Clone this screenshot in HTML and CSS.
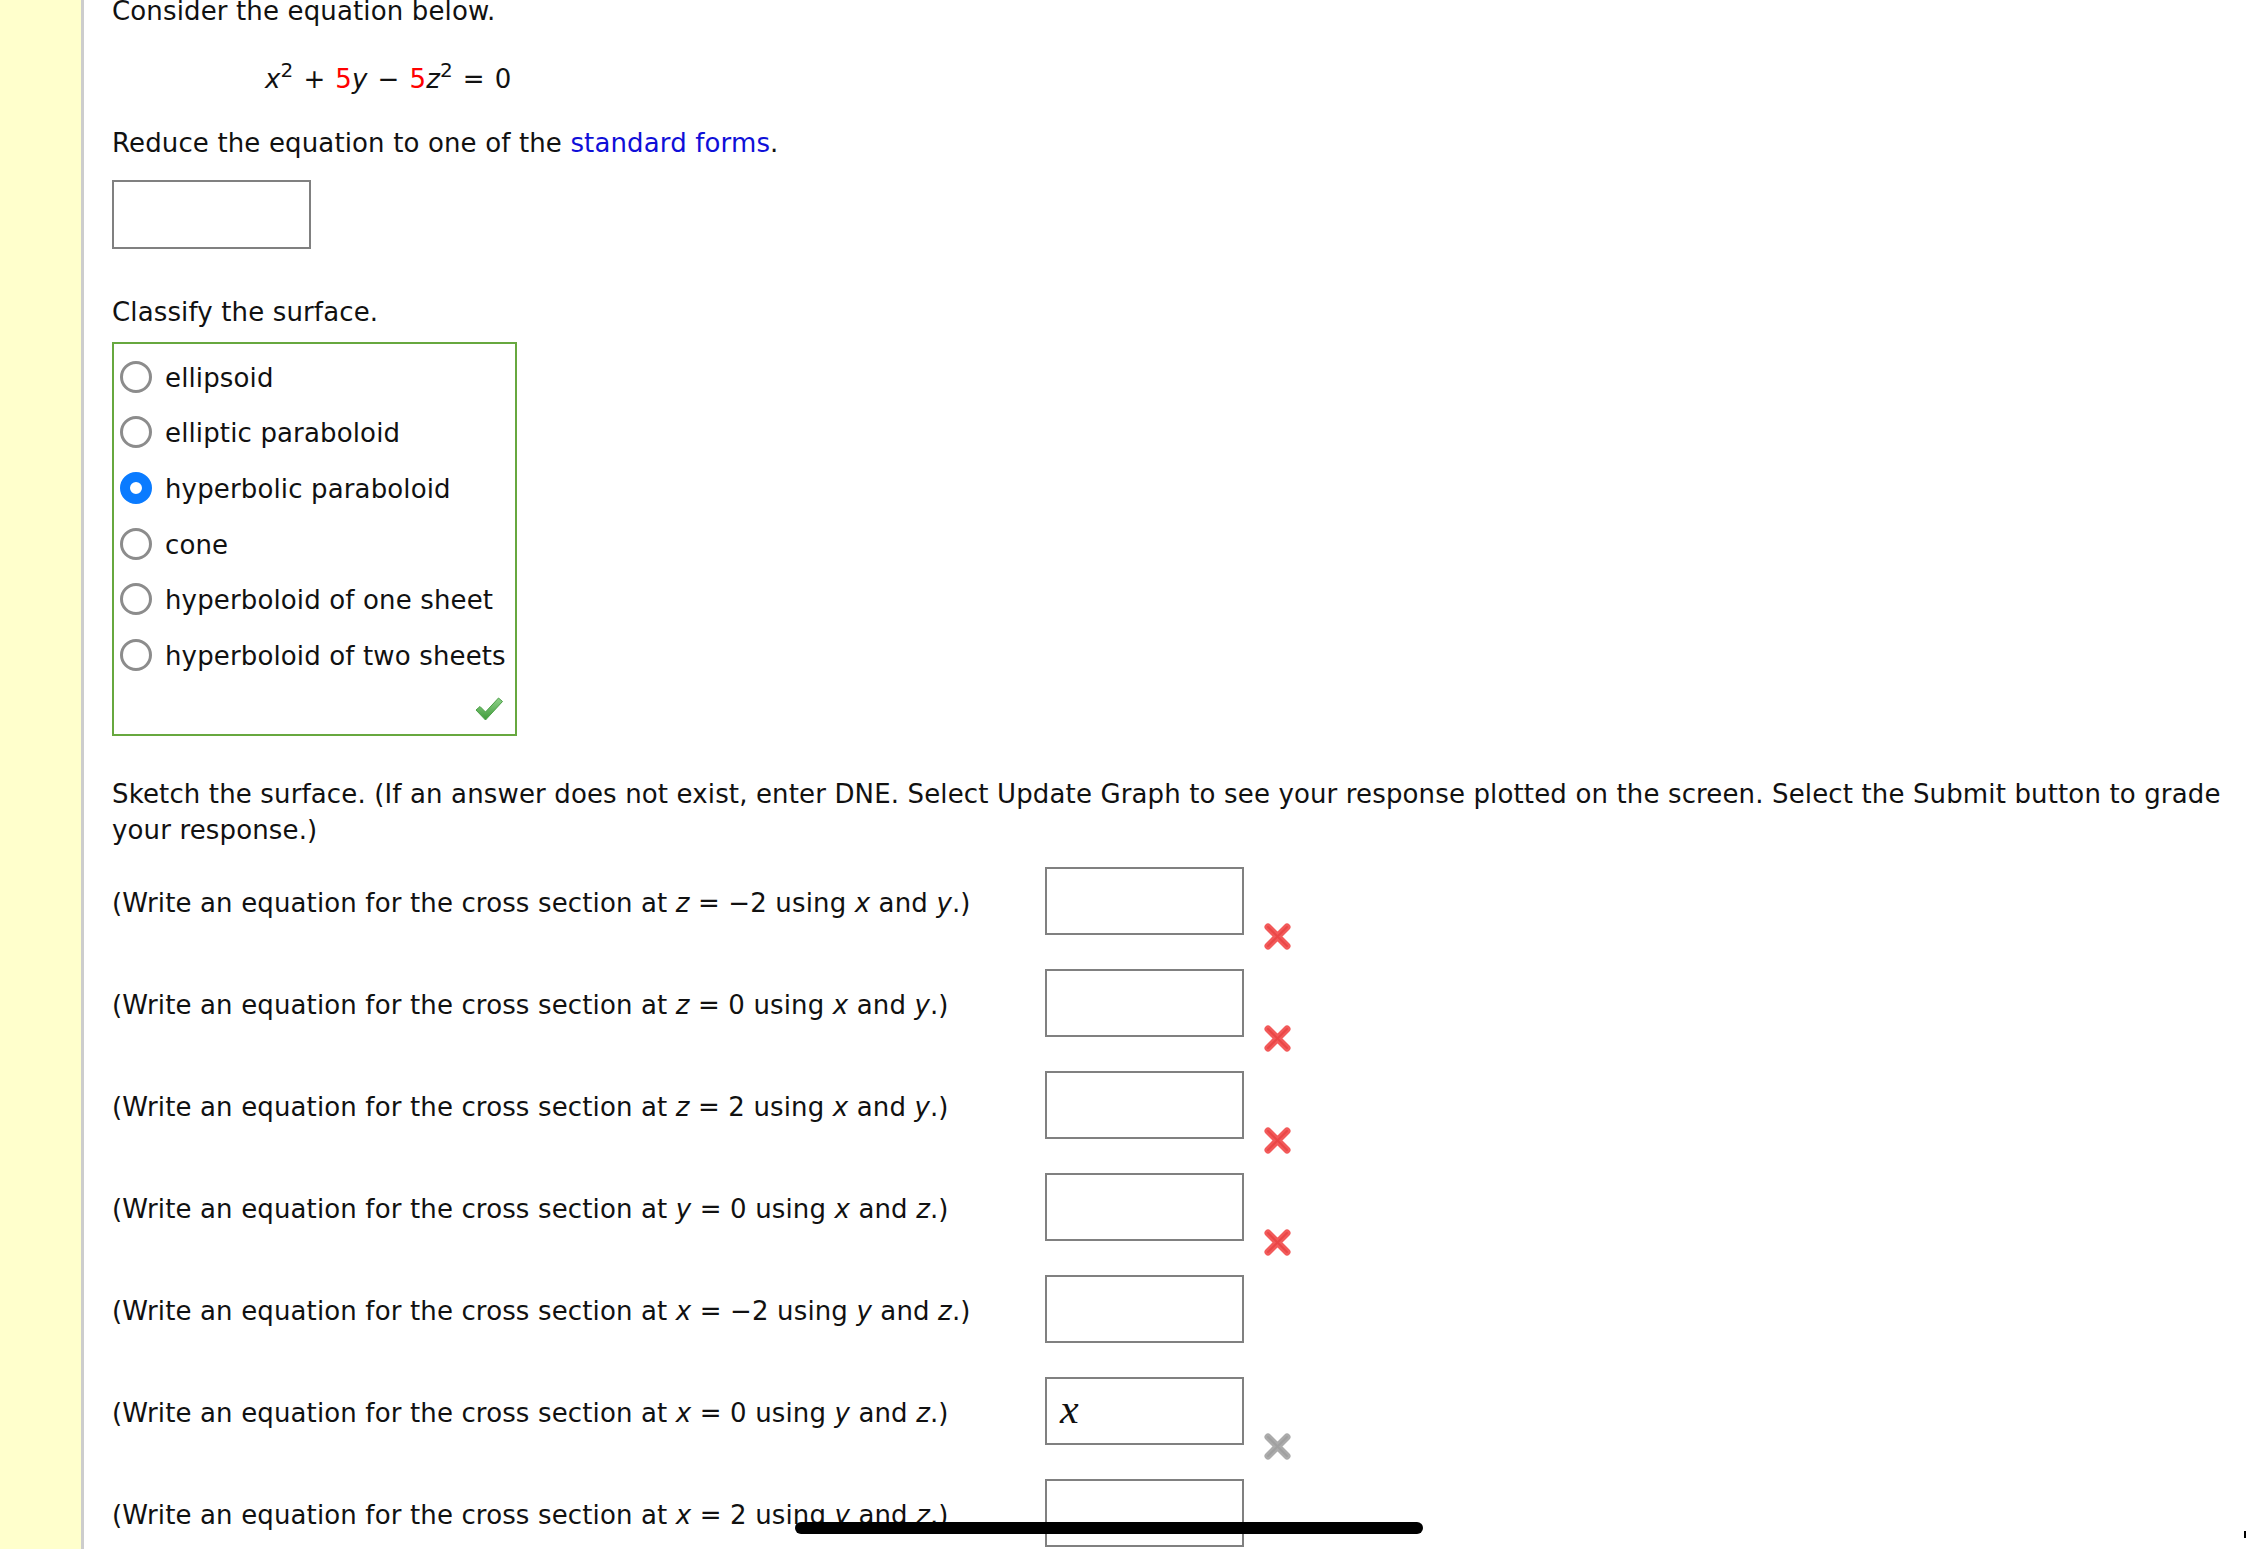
FILE: index.html
```html
<!DOCTYPE html>
<html lang="en">
<head>
<meta charset="utf-8">
<title>Quadric surface</title>
<link rel="stylesheet" href="styles.css">
</head>
<body>
<div class="page">
  <aside class="sidebar"></aside>
  <main class="content">
    <p class="line first">Consider the equation below.</p>
    <p class="line equation"><i>x</i><sup>2</sup><span class="op">+</span><span class="red">5</span><i>y</i><span class="op">−</span><span class="red">5</span><i>z</i><sup>2</sup><span class="op">=</span>0</p>
    <p class="line reduce">Reduce the equation to one of the <a class="link" href="#">standard forms</a>.</p>
    <div class="answer-box single"></div>
    <p class="line classify">Classify the surface.</p>
    <div class="choices">
      <div class="choice"><span class="radio"></span><span>ellipsoid</span></div>
      <div class="choice"><span class="radio"></span><span>elliptic paraboloid</span></div>
      <div class="choice"><span class="radio checked"></span><span>hyperbolic paraboloid</span></div>
      <div class="choice"><span class="radio"></span><span>cone</span></div>
      <div class="choice"><span class="radio"></span><span>hyperboloid of one sheet</span></div>
      <div class="choice"><span class="radio"></span><span>hyperboloid of two sheets</span></div>
      <div class="check-row">
        <svg class="check" width="30" height="26" viewBox="0 0 30 26">
          <defs>
            <linearGradient id="cg" x1="0" y1="0" x2="0" y2="1">
              <stop offset="0" stop-color="#8fd18a"/>
              <stop offset="1" stop-color="#3f9b3a"/>
            </linearGradient>
          </defs>
          <path d="M2 14 L6 10.5 L11.5 16 L24.5 2 L28.5 5.5 L11.5 24 Z" fill="url(#cg)" stroke="#4a9f45" stroke-width="1" stroke-linejoin="round"/>
        </svg>
      </div>
    </div>
    <p class="line sketch">Sketch the surface. (If an answer does not exist, enter DNE. Select Update Graph to see your response plotted on the screen. Select the Submit button to grade your response.)</p>
    <div class="rows">
      <div class="row">
        <span class="label">(Write an equation for the cross section at <i>z</i> = −2 using <i>x</i> and <i>y</i>.)</span>
        <div class="answer-box"></div>
        <svg class="mark" width="27" height="27" viewBox="0 0 27 27"><path d="M4 4 L23 23 M23 4 L4 23" stroke="#f25a5a" stroke-width="7" stroke-linecap="round"/><path d="M4 4 L23 23 M23 4 L4 23" stroke="#e63b3b" stroke-width="2" stroke-linecap="round" opacity="0.6"/></svg>
      </div>
      <div class="row">
        <span class="label">(Write an equation for the cross section at <i>z</i> = 0 using <i>x</i> and <i>y</i>.)</span>
        <div class="answer-box"></div>
        <svg class="mark" width="27" height="27" viewBox="0 0 27 27"><path d="M4 4 L23 23 M23 4 L4 23" stroke="#f25a5a" stroke-width="7" stroke-linecap="round"/><path d="M4 4 L23 23 M23 4 L4 23" stroke="#e63b3b" stroke-width="2" stroke-linecap="round" opacity="0.6"/></svg>
      </div>
      <div class="row">
        <span class="label">(Write an equation for the cross section at <i>z</i> = 2 using <i>x</i> and <i>y</i>.)</span>
        <div class="answer-box"></div>
        <svg class="mark" width="27" height="27" viewBox="0 0 27 27"><path d="M4 4 L23 23 M23 4 L4 23" stroke="#f25a5a" stroke-width="7" stroke-linecap="round"/><path d="M4 4 L23 23 M23 4 L4 23" stroke="#e63b3b" stroke-width="2" stroke-linecap="round" opacity="0.6"/></svg>
      </div>
      <div class="row">
        <span class="label">(Write an equation for the cross section at <i>y</i> = 0 using <i>x</i> and <i>z</i>.)</span>
        <div class="answer-box"></div>
        <svg class="mark" width="27" height="27" viewBox="0 0 27 27"><path d="M4 4 L23 23 M23 4 L4 23" stroke="#f25a5a" stroke-width="7" stroke-linecap="round"/><path d="M4 4 L23 23 M23 4 L4 23" stroke="#e63b3b" stroke-width="2" stroke-linecap="round" opacity="0.6"/></svg>
      </div>
      <div class="row">
        <span class="label">(Write an equation for the cross section at <i>x</i> = −2 using <i>y</i> and <i>z</i>.)</span>
        <div class="answer-box"></div>
      </div>
      <div class="row">
        <span class="label">(Write an equation for the cross section at <i>x</i> = 0 using <i>y</i> and <i>z</i>.)</span>
        <div class="answer-box"><span class="typed">x</span></div>
        <svg class="mark" width="27" height="27" viewBox="0 0 27 27"><path d="M4 4 L23 23 M23 4 L4 23" stroke="#ababab" stroke-width="7" stroke-linecap="round"/><path d="M4 4 L23 23 M23 4 L4 23" stroke="#9a9a9a" stroke-width="2" stroke-linecap="round" opacity="0.6"/></svg>
      </div>
      <div class="row">
        <span class="label">(Write an equation for the cross section at <i>x</i> = 2 using <i>y</i> and <i>z</i>.)</span>
        <div class="answer-box"></div>
      </div>
    </div>
  </main>
  <div class="home-bar"></div>
  <div class="edge-tick"></div>
</div>
</body>
</html>
```
FILE: styles.css
```css
html, body {
  margin: 0;
  padding: 0;
  background: #ffffff;
}

body {
  font-family: "DejaVu Sans", Verdana, sans-serif;
  font-size: 26px;
  line-height: 36px;
  letter-spacing: 0.14px;
  color: #111111;
  overflow: hidden;
}

.page {
  position: relative;
  display: flex;
  min-height: 1549px;
}

.sidebar {
  width: 81px;
  flex: none;
  background: #ffffcc;
  border-right: 3px solid #cdcdcd;
}

.content {
  flex: 1;
  padding-left: 28px;
  display: flex;
  flex-direction: column;
  align-items: flex-start;
}

.line {
  margin: 0;
}

.first {
  margin-top: -7px;
}

.equation {
  margin-top: 32px;
  padding-left: 153px;
}

.equation .op {
  margin: 0 10px;
}

.equation sup {
  font-size: 20px;
  line-height: 0;
  vertical-align: 11px;
}

.red {
  color: #ff0000;
}

.reduce {
  margin-top: 28px;
}

.link {
  color: #0f0fd8;
  text-decoration: none;
}

.answer-box {
  box-sizing: border-box;
  width: 199px;
  height: 68px;
  border: 2px solid #808080;
  background: #ffffff;
  flex: none;
}

.single {
  margin-top: 19px;
  height: 69px;
}

.classify {
  margin-top: 45px;
}

.choices {
  box-sizing: border-box;
  margin-top: 12px;
  width: 405px;
  height: 394px;
  border: 2px solid #67a83f;
  padding-top: 5px;
  display: flex;
  flex-direction: column;
}

.choice {
  height: 55.6px;
  display: flex;
  align-items: center;
  padding-left: 6px;
  gap: 13px;
  white-space: nowrap;
}

.choice span:last-child {
  padding-top: 2px;
}

.radio {
  box-sizing: border-box;
  width: 32px;
  height: 32px;
  border-radius: 50%;
  border: 3px solid #8c8c8c;
  background: #ffffff;
  flex: none;
}

.radio.checked {
  border: 10px solid #0a7bff;
}

.check-row {
  flex: 1;
  display: flex;
  justify-content: flex-end;
  align-items: flex-end;
  padding-right: 11px;
  padding-bottom: 12px;
}

.sketch {
  margin-top: 40px;
  max-width: 2120px;
}

.rows {
  margin-top: 19px;
  display: flex;
  flex-direction: column;
  gap: 34px;
}

.row {
  display: flex;
  align-items: center;
  height: 68px;
}

.label {
  width: 933px;
  flex: none;
  white-space: nowrap;
  padding-top: 4px;
}

.mark {
  flex: none;
  margin-left: 20px;
  align-self: flex-end;
  margin-bottom: -15px;
}

.typed {
  display: block;
  padding-left: 13px;
  font-family: "Liberation Serif", "Times New Roman", serif;
  font-style: italic;
  font-size: 42px;
  line-height: 60px;
  color: #111111;
}

.home-bar {
  position: absolute;
  left: 795px;
  top: 1522px;
  width: 628px;
  height: 12px;
  border-radius: 6px;
  background: #000000;
}

.edge-tick {
  position: absolute;
  left: 2244px;
  top: 1531px;
  width: 2px;
  height: 7px;
  background: #000000;
}
```
